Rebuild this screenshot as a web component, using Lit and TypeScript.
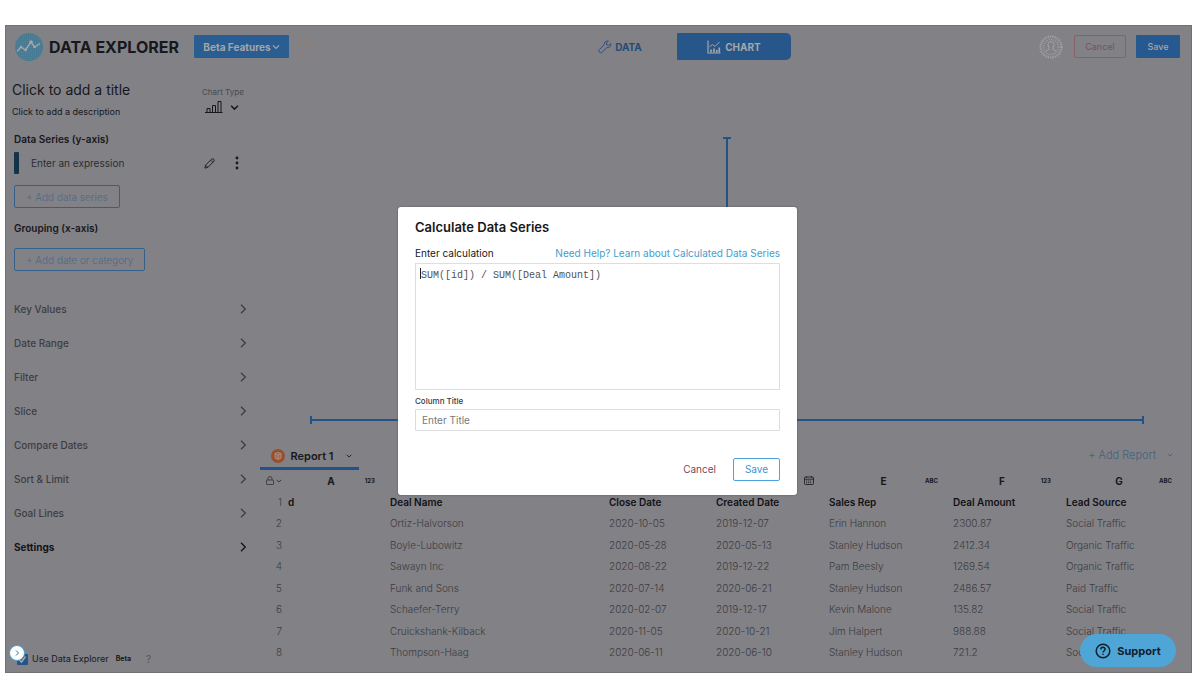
import { LitElement, html, css, svg } from "lit";
import { customElement, state } from "lit/decorators.js";
import { classMap } from "lit/directives/class-map.js";

const SECTIONS = ["Key Values", "Date Range", "Filter", "Slice", "Compare Dates", "Sort & Limit", "Goal Lines", "Settings"];

const COLUMNS = [
  { letter: "A", type: "123", width: 89 },
  { letter: "B", type: "ABC", width: 219 },
  { letter: "C", type: "date", width: 107 },
  { letter: "D", type: "date", width: 113 },
  { letter: "E", type: "ABC", width: 124 },
  { letter: "F", type: "123", width: 113 },
  { letter: "G", type: "ABC", width: 121 },
];

const HEADINGS = ["d", "Deal Name", "Close Date", "Created Date", "Sales Rep", "Deal Amount", "Lead Source"];

const ROWS = [
  ["", "Ortiz-Halvorson", "2020-10-05", "2019-12-07", "Erin Hannon", "2300.87", "Social Traffic"],
  ["", "Boyle-Lubowitz", "2020-05-28", "2020-05-13", "Stanley Hudson", "2412.34", "Organic Traffic"],
  ["", "Sawayn Inc", "2020-08-22", "2019-12-22", "Pam Beesly", "1269.54", "Organic Traffic"],
  ["", "Funk and Sons", "2020-07-14", "2020-06-21", "Stanley Hudson", "2486.57", "Paid Traffic"],
  ["", "Schaefer-Terry", "2020-02-07", "2019-12-17", "Kevin Malone", "135.82", "Social Traffic"],
  ["", "Cruickshank-Kilback", "2020-11-05", "2020-10-21", "Jim Halpert", "988.88", "Social Traffic"],
  ["", "Thompson-Haag", "2020-06-11", "2020-06-10", "Stanley Hudson", "721.2", "Social Traffic"],
];

const chevronDown = (size: number, width = 1.5) => html`<svg width=${size} height=${size} viewBox="0 0 10 10" fill="none" stroke="currentColor" stroke-width=${width} aria-hidden="true"><path d="M1.2 3l3.8 3.8L8.800 3" /></svg>`;

const chevronRight = html`<svg width="8" height="10" viewBox="0 0 8 10" fill="none" stroke="currentColor" stroke-width="1.3" aria-hidden="true"><path d="M2 .8L6.300 5 2 9.200" /></svg>`;

const logo = html`<svg width="28" height="28" viewBox="0 0 28 28" aria-hidden="true">
  <defs><pattern id="dots" width="2" height="2" patternUnits="userSpaceOnUse"><rect width="2" height="2" fill="#477a93" /><rect width="1" height="1" fill="#5c8090" /></pattern></defs>
  <circle cx="14" cy="14" r="14" fill="url(#dots)" />
  <path d="M2 18.500L6 14l4.500 3L16 9l3.500 5L25 10.500" fill="none" stroke="#a4a6aa" stroke-width="1.4" />
  <g fill="#a4a6aa"><circle cx="6" cy="14" r="1.200" /><circle cx="10.500" cy="17" r="1.300" /><circle cx="16" cy="9" r="1.800" /><circle cx="19.500" cy="14" r="1.300" /></g>
</svg>`;

const spinner = html`<svg width="22" height="20" viewBox="0 0 22 20" fill="none" stroke="#a17a64" stroke-width="1" aria-hidden="true"><circle cx="11" cy="10" r="8.500" stroke-dasharray="1.500 2.500" /><path d="M7 5l2 2M13 8l4-3M8 12l4 4" stroke-dasharray="1 1.500" /></svg>`;

const wrench = html`<svg width="14" height="14" viewBox="0 0 14 14" fill="none" stroke="currentColor" stroke-width=".9" stroke-linejoin="round" aria-hidden="true"><path d="M12.700 3.700l-2 1.700-1.900-.6-.4-1.700L10.300 1.200C8.300.6 6 2 6.200 4.700L1.400 9.600c-1.600 1.700.8 4.200 2.600 2.700l4.900-4.700c2.700.3 4.500-1.600 3.800-3.900z" /></svg>`;

const lineBars = html`<svg width="14" height="14" viewBox="0 0 14 14" fill="none" stroke="currentColor" aria-hidden="true"><path d="M1 .5v12.500h12.500" stroke-width="1.200" /><path d="M2.500 7l3-2.500 2.500 2L12.500 2" stroke-width="1" /><path d="M4 12.500V9.500M7 12.500V8.500M9.800 12.500V10M12.300 12.500V7.500" stroke-width="1.700" /></svg>`;

const gearUser = html`<svg width="24" height="24" viewBox="0 0 24 24" fill="none" stroke="#a1a1a4" aria-hidden="true"><circle cx="12" cy="12" r="10.500" stroke-width="2.200" stroke-dasharray="1.300 1" /><circle cx="12" cy="12" r="7.500" stroke-width="1.500" stroke-dasharray="1 1.200" /><path d="M12 6.500a3.200 3.200 0 0 1 2 5.600v2l3 2M12 6.500a3.200 3.200 0 0 0-2 5.600v2l-3 2" stroke-width="1.100" /></svg>`;

const barsOutline = html`<svg width="18" height="12" viewBox="0 0 18 12" fill="none" stroke="currentColor" aria-hidden="true"><path d="M0 11.500h17.500M2 11.500v-4h3v4M7.500 11.500v-7h3v7M13 11.500v-11h3v11" /></svg>`;

const pencil = html`<svg width="11" height="11" viewBox="0 0 12 12" fill="none" stroke="currentColor" stroke-width="1" stroke-linejoin="round" aria-hidden="true"><path d="M1 11l.7-3.200L8.400 1.200c1.500-1.200 3.500.8 2.400 2.400L4.200 10.300zM2 8l2 2M7.500 2.500l2 2" /></svg>`;

const kebab = html`<svg width="4" height="14" viewBox="0 0 4 14" fill="currentColor" aria-hidden="true"><circle cx="2" cy="2" r="1.400" /><circle cx="2" cy="7" r="1.400" /><circle cx="2" cy="12" r="1.400" /></svg>`;

const reportBadge = html`<svg width="14" height="14" viewBox="0 0 14 14" aria-hidden="true"><circle cx="7" cy="7" r="7" fill="#96502f" /><path d="M7 3.500l3 1v4.500l-3 1.500-3-1.500V4.500zM4 4.500l3 1.500 3-1.500M7 6v4.500" fill="#a0694f" stroke="#b8968a" stroke-width=".8" /></svg>`;

const lock = html`<svg width="8" height="9" viewBox="0 0 8 9" fill="none" stroke="currentColor" stroke-width=".8" aria-hidden="true"><rect x=".5" y="4" width="7" height="4.500" rx=".6" /><path d="M2 4V2.500a2 2 0 0 1 4 0V4" /></svg>`;

const calendar = html`<svg width="10" height="9" viewBox="0 0 10 9" fill="none" stroke="currentColor" stroke-width=".8" aria-hidden="true"><rect x=".5" y="1" width="9" height="7.500" rx="1" /><path d="M.5 3.200h9M2.500 0v1.500M7.500 0v1.500" /><path d="M2 5h6M2 6.700h6" stroke-dasharray="1.200 .8" /></svg>`;

const axes = svg`
  <line x1="0" y1="100%" x2="100%" y2="100%" stroke-width="2" />
  <line x1="50%" y1="0" x2="50%" y2="100%" stroke-width="2" />
`;

@customElement("app-root")
export class AppRoot extends LitElement {
  @state() private calculation = "SUM([id]) / SUM([Deal Amount])";

  static styles = css`
    :host { display: block; box-sizing: border-box; height: 100vh; padding: 25px 8px 9px 5px; background: #fff; font-family: Inter, sans-serif; font-size: 10px; line-height: 14px; color: #17181c; }
    *, *::before, *::after { box-sizing: border-box; }
    button, input, textarea { font: inherit; color: inherit; margin: 0; }
    button { display: inline-flex; align-items: center; justify-content: center; padding: 0; border: 0; background: none; white-space: nowrap; cursor: pointer; }
    svg { display: block; flex: none; }
    .frame { position: relative; height: 100%; display: flex; flex-direction: column; overflow: hidden; background: #828186; border: 1px solid #717075; }
    .top { display: flex; align-items: center; justify-content: space-between; height: 41px; flex: none; padding: 0 11px 0 9px; }
    .group { display: flex; align-items: center; }
    .name { margin: 0 15px 0 6px; font-size: 16px; font-weight: 700; white-space: nowrap; }
    .beta { height: 23px; width: 95px; gap: 1px; margin-right: 4px; background: #2a5d92; color: #a5a6a9; font-weight: 700; border-radius: 1px; }
    .tab { width: 114px; height: 27px; gap: 3px; font-weight: 700; color: #244c79; }
    .tab.on { gap: 4px; background: #27568a; color: #a5a6a9; border-radius: 1px 5px 5px 1px; }
    .cancel { width: 52px; height: 23px; margin: 0 10px 0 11px; border: 1px solid #896064; border-radius: 2px; color: #70565b; font-size: 9px; }
    .save { width: 44px; height: 23px; background: #265990; border-radius: 1px; color: #a5a6a9; font-size: 9px; font-weight: 500; }
    .body { display: flex; flex: 1; min-height: 0; }
    .side { width: 254px; flex: none; display: flex; flex-direction: column; padding: 0 13px 6px 6px; }
    .head { display: grid; grid-template-columns: 190px 1fr; height: 58px; padding-top: 14px; }
    .title { margin: 0; font-size: 14px; line-height: 18px; font-weight: 400; }
    .desc { margin: 6px 0 0; font-size: 9px; }
    .typeLabel { font-size: 8px; line-height: 10px; padding-top: 6px; color: #494a4e; }
    .type { gap: 7px; margin: 4px 0 0 3px; }
    h2 { margin: 0; font-size: 10px; font-weight: 600; line-height: 14px; }
    .series { display: flex; align-items: center; height: 22px; margin: 6px 0 11px 2px; }
    .mark { width: 5px; height: 22px; margin-right: 12px; border-radius: 1px; background: #123348; }
    .expr { flex: 1; color: #2c2d31; }
    .edit { margin-right: 20px; }
    .more { margin-right: 8px; }
    .add { height: 23px; align-self: flex-start; margin-left: 2px; border: 1px solid #355f8c; border-radius: 2px; color: #4b6988; font-weight: 300; padding: 0 11px; }
    .grouping { margin: 13px 0 13px 2px; }
    .seriesTitle { margin: 7px 0 0 2px; }
    .sections { margin: 21px 0 0 2px; }
    .section { display: flex; width: 100%; height: 34px; justify-content: space-between; font-size: 10px; font-weight: 500; color: #3d3e42; }
    .section.strong { font-weight: 700; color: #131418; }
    .foot { display: flex; align-items: center; margin-top: auto; padding-left: 5px; }
    .check { display: flex; align-items: center; gap: 4px; font-size: 9px; }
    .box { position: relative; display: block; width: 11px; height: 11px; }
    .box input { appearance: none; display: block; width: 11px; height: 11px; background: #24548a; border-radius: 1px; }
    .box svg { position: absolute; inset: 1px; }
    .tag { margin: 0 15px 0 7px; font-size: 7px; font-weight: 700; }
    .hint { color: #55565a; font-size: 10px; }
    .main { flex: 1; min-width: 0; display: flex; flex-direction: column; overflow: hidden; }
    .chart { flex: none; height: 375px; padding: 71px 47px 22px 50px; }
    .axes { width: 100%; height: 100%; overflow: visible; stroke: #23528a; }
    .plot { position: relative; width: 100%; height: 100%; }
    .plot::before, .plot::after { content: ""; position: absolute; bottom: -4px; width: 2px; height: 8px; background: #23528a; }
    .plot::before { left: 0; }
    .plot::after { right: 0; }
    .cap { position: absolute; top: -1px; left: calc(50% - 4px); width: 8px; height: 2px; background: #23528a; }
    .reports { display: flex; justify-content: space-between; height: 28px; flex: none; padding-right: 18px; }
    .report { width: 99px; height: 28px; gap: 6px; padding: 2px 0 0 4px; font-size: 11px; font-weight: 600; border-bottom: 3px solid #23528a; }
    .report svg:last-child { margin-left: 7px; }
    .addReport { gap: 11px; font-size: 11px; font-weight: 300; color: #45627e; padding-bottom: 2px; }
    .sheet { width: 100%; table-layout: fixed; border-collapse: collapse; }
    .sheet th, .sheet td { padding: 0 0 0 14px; height: 21px; text-align: left; white-space: nowrap; overflow: hidden; }
    .sheet tbody tr:nth-child(even) td, .sheet tbody tr:nth-child(even) th { height: 22px; }
    .sheet td { font-size: 10px; font-weight: 300; color: #3b3c40; }
    .sheet .names td { font-weight: 600; color: #111216; }
    .sheet .num { padding: 0 5px 0 0; width: 27px; text-align: right; font-weight: 300; color: #3b3c40; }
    .sheet td.id { padding-left: 1px; }
    .sheet thead th { height: 21px; padding: 0 0 0 14px; font-weight: 700; }
    .sheet thead th:nth-child(-n + 2) { padding-left: 0; }
    .letters { display: grid; grid-template-columns: 1fr auto 1fr; align-items: center; padding-right: 1px; }
    .kind { justify-self: end; font-size: 6px; font-weight: 700; }
    .letter { padding: 0 1px; }
    .letter.first { grid-column: 2; }
    .locker { display: flex; align-items: center; gap: 2px; padding-left: 6px; color: #303135; }
    .veil { position: absolute; inset: 0; display: flex; align-items: center; justify-content: center; padding-right: 2px; pointer-events: none; }
    .modal { width: 399px; max-width: 100%; padding: 11px 17px 14px; margin-top: 3px; border: 0; border-radius: 3px; background: #fff; box-shadow: 0 0 2px #55555a; pointer-events: auto; display: flex; flex-direction: column; }
    .modalTitle { margin: 0; font-size: 13px; line-height: 18px; font-weight: 600; }
    .line { display: flex; justify-content: space-between; margin: 10px 0 3px; }
    .line a { color: #459cce; text-decoration: none; }
    .calc { display: block; width: 100%; height: 127px; padding: 5px; border: 1px solid #dedede; border-radius: 0; outline: 0; resize: none; background: #fff; color: #505055; font: 10px/13px "Liberation Mono", monospace; }
    .small { margin: 5px 0 2px; font-size: 8px; line-height: 12px; font-weight: 500; color: #38393d; }
    .text { width: 100%; height: 22px; padding: 0 6px; border: 1px solid #dcdcdc; border-radius: 1px; outline: 0; font-size: 10px; }
    .text::placeholder { color: #77787c; opacity: 1; }
    .actions { display: flex; justify-content: flex-end; gap: 17px; margin-top: 27px; color: #794b5b; }
    .actions button:first-child { color: #794b5b; }
    .actions .ok { width: 47px; height: 23px; border: 1px solid #4da3dd; border-radius: 2px; color: #3b96cf; }
    .expand { position: absolute; left: 3px; bottom: 11px; width: 16px; height: 16px; border: 1px solid #4d9fd2; border-radius: 50%; background: #fff; color: #3c6f91; }
    .support { position: absolute; right: 15px; bottom: 5px; width: 96px; height: 33px; gap: 6px; border-radius: 17px; background: #4fa5d6; color: #10202c; font-size: 11px; font-weight: 700; }
    .caret { position: absolute; left: 5px; top: 5px; width: 1px; height: 11px; background: #222; }
    .field { position: relative; }
  `;

  private kind(type: string) {
    return type === "date" ? calendar : type;
  }

  private renderSidebar() {
    return html`<aside class="side">
      <div class="head">
        <div><h1 class="title">Click to add a title</h1><p class="desc">Click to add a description</p></div>
        <div><div class="typeLabel">Chart Type</div><button class="type" aria-label="Chart type">${barsOutline}${chevronDown(9, 1.7)}</button></div>
      </div>
      <h2 class="seriesTitle">Data Series (y-axis)</h2>
      <div class="series"><span class="mark"></span><span class="expr">Enter an expression</span><button class="edit" aria-label="Edit">${pencil}</button><button class="more" aria-label="More">${kebab}</button></div>
      <button class="add">+ Add data series</button>
      <h2 class="grouping">Grouping (x-axis)</h2>
      <button class="add">+ Add date or category</button>
      <nav class="sections">
        ${SECTIONS.map((name, i) => html`<button class=${classMap({ section: true, strong: i === SECTIONS.length - 1 })}>${name}${chevronRight}</button>`)}
      </nav>
      <div class="foot">
        <label class="check"><span class="box"><input type="checkbox" checked /><svg width="9" height="9" viewBox="0 0 9 9" fill="none" stroke="#a9a9ac" stroke-width="1.500"><path d="M1.500 5l2 2L7.500 1.500" /></svg></span>Use Data Explorer</label>
        <span class="tag">Beta</span><span class="hint">?</span>
      </div>
    </aside>`;
  }

  private renderSheet() {
    return html`<table class="sheet">
      <colgroup><col style="width:27px" />${COLUMNS.map((c) => html`<col style="width:${c.width}px" />`)}<col style="width:19px" /></colgroup>
      <thead><tr><th><span class="locker">${lock}${chevronDown(6)}</span></th>
        ${COLUMNS.map((c) => html`<th scope="col"><div class="letters"><span class="letter first">${c.letter}</span><span class="kind">${this.kind(c.type)}</span></div></th>`)}<th></th></tr></thead>
      <tbody>
        <tr class="names"><th class="num" scope="row">1</th>${HEADINGS.map((h, i) => html`<td class=${classMap({ id: i === 0 })}>${h}</td>`)}<td></td></tr>
        ${ROWS.map((row, r) => html`<tr><th class="num" scope="row">${r + 2}</th>${row.map((v) => html`<td>${v}</td>`)}<td></td></tr>`)}
      </tbody>
    </table>`;
  }

  private renderModal() {
    return html`<div class="veil"><form class="modal" role="dialog" aria-labelledby="dialog-title" @submit=${(e: Event) => e.preventDefault()}>
      <h2 class="modalTitle" id="dialog-title">Calculate Data Series</h2>
      <div class="line"><label for="calc">Enter calculation</label><a href="#help">Need Help? Learn about Calculated Data Series</a></div>
      <div class="field"><textarea class="calc" id="calc" spellcheck="false" .value=${this.calculation} @input=${(e: Event) => (this.calculation = (e.target as HTMLTextAreaElement).value)}></textarea><span class="caret"></span></div>
      <label class="small" for="column-title">Column Title</label>
      <input class="text" id="column-title" type="text" placeholder="Enter Title" />
      <div class="actions"><button type="button">Cancel</button><button class="ok" type="submit">Save</button></div>
    </form></div>`;
  }

  render() {
    return html`<div class="frame">
      <header class="top">
        <div class="group">${logo}<span class="name">DATA EXPLORER</span><button class="beta">Beta Features${chevronDown(8)}</button>${spinner}</div>
        <div class="group"><button class="tab">${wrench}DATA</button><button class="tab on">${lineBars}CHART</button></div>
        <div class="group">${gearUser}<button class="cancel">Cancel</button><button class="save">Save</button></div>
      </header>
      <div class="body">
        ${this.renderSidebar()}
        <main class="main">
          <div class="chart"><div class="plot"><svg class="axes">${axes}</svg><span class="cap"></span></div></div>
          <div class="reports"><button class="report">${reportBadge}Report 1${chevronDown(6)}</button><button class="addReport">+ Add Report${chevronDown(6)}</button></div>
          ${this.renderSheet()}
        </main>
      </div>
      ${this.renderModal()}
      <button class="expand" aria-label="Expand"><svg width="6" height="6" viewBox="0 0 6 6" fill="none" stroke="currentColor"><path d="M2 .5L4.500 3 2 5.500" /></svg></button>
      <button class="support"><svg width="16" height="16" viewBox="0 0 16 16" fill="none" stroke="currentColor" stroke-width="1.500"><circle cx="8" cy="8" r="6.800" /><path d="M5.900 6.400c0-2.700 4.200-2.700 4.200-.2C10.100 7.700 8 7.800 8 9.600M8 10.700v1.400" /></svg>Support</button>
    </div>`;
  }
}
